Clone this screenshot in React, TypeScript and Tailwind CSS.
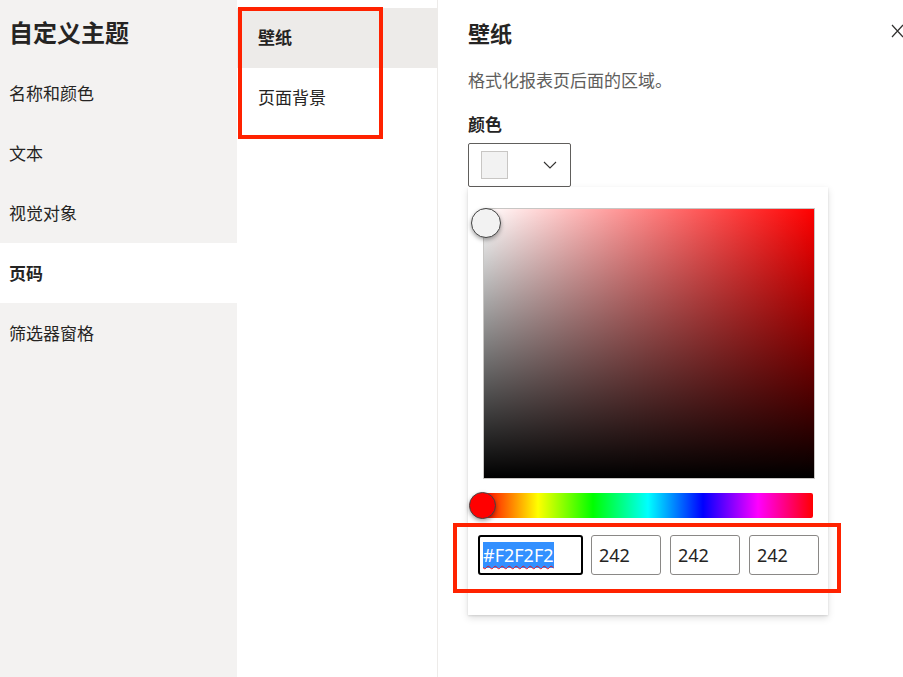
import React from 'react'

const font = { fontFamily: '"Noto Sans", "Noto Sans CJK SC", sans-serif' }

const navItems = ['名称和颜色', '文本', '视觉对象', '页码', '筛选器窗格']

export default function App() {
  return (
    <div className="flex h-[677px] w-[903px] overflow-hidden bg-white text-[#252423]" style={font}>
      {/* left nav */}
      <div className="w-[237px] shrink-0 bg-[#f3f2f1] pt-[17px]">
        <h1 className="px-[9px] text-[24px] font-bold leading-[32px]">自定义主题</h1>
        <div className="mt-[14px]">
          {navItems.map((t) => (
            <div
              key={t}
              className={
                'flex h-[60px] items-center px-[9px] pt-[1px] text-[17px] ' +
                (t === '页码' ? 'bg-white font-bold' : '')
              }
            >
              {t}
            </div>
          ))}
        </div>
      </div>

      {/* sub nav */}
      <div className="relative w-[201px] shrink-0 border-r border-[#edebe9] pt-[8px]">
        <div className="flex h-[60px] items-center bg-[#edebe9] px-[21px] text-[17px] font-bold">壁纸</div>
        <div className="flex h-[60px] items-center px-[21px] text-[17px]">页面背景</div>
        <div className="pointer-events-none absolute left-[1px] top-[7px] h-[132px] w-[145px] border-4 border-[#ff2200]" />
      </div>

      {/* detail panel */}
      <div className="relative flex-1 pl-[30px] pt-[19px]">
        <div className="flex items-center justify-between">
          <h2 className="text-[22px] font-bold leading-[28px]">壁纸</h2>
          <svg width="12" height="16" viewBox="0 0 12 16" className="mt-[-5px]">
            <path d="M1 2 L12 14 M12 2 L1 14" stroke="#323130" strokeWidth="1.2" fill="none" />
          </svg>
        </div>
        <p className="mt-[22px] text-[17px] leading-[24px] text-[#605e5c]">格式化报表页后面的区域。</p>
        <div className="mt-[20px] text-[17px] font-bold leading-[24px]">颜色</div>

        <div className="mt-[6px] flex h-[44px] w-[103px] items-center justify-between rounded-[2px] border border-[#605e5c] pl-[12px] pr-[13px]">
          <div className="h-[28px] w-[27px] border border-[#c8c6c4] bg-[#f2f2f2]" />
          <svg width="14" height="8" viewBox="0 0 14 8">
            <path d="M1 1 L7 7 L13 1" stroke="#323130" strokeWidth="1.1" fill="none" />
          </svg>
        </div>

        {/* colour picker callout */}
        <div className="w-[360px] bg-white px-[15px] pb-[40px] pt-[21px] shadow-[0_3.2px_7.2px_rgba(0,0,0,0.13),0_0.6px_1.8px_rgba(0,0,0,0.11)]">
          <div className="relative h-[271px] w-[332px] border border-[#c8c6c4] bg-[linear-gradient(to_right,#ffffff,#ff0000)]">
            <div className="absolute inset-0 bg-[linear-gradient(to_bottom,rgba(0,0,0,0),#000000)]" />
            <div className="absolute left-[-13px] top-[-1px] h-[30px] w-[30px] rounded-full border border-[#444] bg-[#f2f2f2] shadow-[0_2px_4px_rgba(0,0,0,0.35)]" />
          </div>

          <div className="relative mt-[14px] h-[25px] w-[330px] rounded-[2px] bg-[linear-gradient(to_right,#ff0000,#ffff00,#00ff00,#00ffff,#0000ff,#ff00ff,#ff0000)]">
            <div className="absolute left-[-14px] top-[-1px] h-[27px] w-[27px] rounded-full border border-[#444] bg-[#ff0000] shadow-[0_2px_4px_rgba(0,0,0,0.35)]" />
          </div>

          <div className="mt-[17px] ml-[-5px] flex h-[40px] gap-[8px]">
            <div className="flex w-[105px] shrink-0 items-center rounded-[3px] border-2 border-black pl-[3px] text-[18px]">
              <span className="bg-[#3390ff] leading-[26px] text-white underline decoration-[#e81123] decoration-wavy decoration-1 underline-offset-[3px]">
                #F2F2F2
              </span>
            </div>
            {['242', '242', '242'].map((v, i) => (
              <div
                key={i}
                className={
                  'flex w-[70px] shrink-0 items-center rounded-[3px] border border-[#8a8886] pl-[7px] text-[18px] ' +
                  (i > 0 ? 'ml-[1px]' : '')
                }
              >
                {v}
              </div>
            ))}
          </div>
        </div>

        <div className="pointer-events-none absolute left-[15px] top-[523px] h-[70px] w-[388px] border-4 border-[#ff2200]" />
      </div>
    </div>
  )
}
